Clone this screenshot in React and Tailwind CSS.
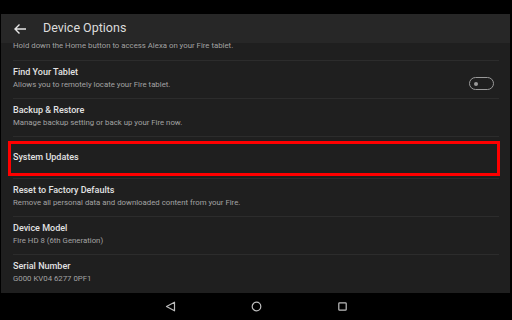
import React from "react";

const rows = [
  { title: "Find Your Tablet", sub: "Allows you to remotely locate your Fire tablet.", toggle: true },
  { title: "Backup & Restore", sub: "Manage backup setting or back up your Fire now." },
  { title: "System Updates", highlight: true },
  { title: "Reset to Factory Defaults", sub: "Remove all personal data and downloaded content from your Fire." },
  { title: "Device Model", sub: "Fire HD 8 (6th Generation)" },
  { title: "Serial Number", sub: "G000 KV04 6277 0PF1" },
];

function Toggle() {
  return (
    <div className="mt-[11px] mr-[5px] flex h-[13px] w-[25px] shrink-0 items-center rounded-full border-[1.5px] border-[#9a9a9a] pl-[4px]">
      <div className="h-[4px] w-[4px] rounded-full bg-[#9a9a9a]" />
    </div>
  );
}

function Row({ row, last }) {
  if (row.highlight) {
    return (
      <div className="relative flex h-[42px] items-center border-b border-[#2c2c2c] pb-[1px]">
        <div className="text-[9px] font-medium leading-[13px] text-[#e2e2e2]">{row.title}</div>
        <div className="absolute -left-[5px] -right-[1px] top-[4px] bottom-[2px] border-[3px] border-[#ff0000]" />
      </div>
    );
  }
  return (
    <div
      className={[
        "flex h-[38px] justify-between pt-[5px]",
        last ? "" : "border-b border-[#2c2c2c]",
      ].join(" ")}
    >
      <div>
        <div className="text-[9px] font-medium leading-[13px] text-[#e2e2e2]">{row.title}</div>
        <div className="text-[7.8px] leading-[11px] text-[#a3a3a3]">{row.sub}</div>
      </div>
      {row.toggle && <Toggle />}
    </div>
  );
}

export default function App() {
  return (
    <div
      className="flex h-[320px] w-[512px] flex-col bg-black"
      style={{ fontFamily: "Roboto, 'Liberation Sans', sans-serif" }}
    >
      <div className="h-[14px] shrink-0" />

      <div className="ml-[1px] mr-[2px] flex h-[279px] flex-col bg-[#1f1f1f]">
        <div className="z-10 flex h-[29px] shrink-0 items-center bg-[#272727] pl-[12px]">
          <svg width="14" height="12" viewBox="0 0 14 12" className="mr-[16px]">
            <path d="M13 6H2M6.5 1.5 2 6l4.5 4.5" fill="none" stroke="#e6e6e6" strokeWidth="1.4" />
          </svg>
          <div className="text-[12.5px] text-[#dcdcdc]">Device Options</div>
        </div>

        <div className="flex-1 overflow-hidden">
          <div className="ml-[12px] mr-[11px]">
            <div className="flex h-[18px] flex-col justify-end border-b border-[#2c2c2c] pb-[9px]">
              <div className="shrink-0 text-[7.8px] leading-[11px] text-[#a3a3a3]">
                Hold down the Home button to access Alexa on your Fire tablet.
              </div>
            </div>
            {rows.map((row, i) => (
              <Row key={row.title} row={row} last={i === rows.length - 1} />
            ))}
          </div>
        </div>
      </div>

      <div className="flex flex-1 items-center justify-center gap-[75px]">
        <svg width="11" height="11" viewBox="0 0 11 11">
          <path d="M9.5 1.2v8.6L1.5 5.5z" fill="none" stroke="#bdbdbd" strokeWidth="1.2" strokeLinejoin="round" />
        </svg>
        <svg width="11" height="11" viewBox="0 0 11 11">
          <circle cx="5.5" cy="5.5" r="4.3" fill="none" stroke="#bdbdbd" strokeWidth="1.2" />
        </svg>
        <svg width="11" height="11" viewBox="0 0 11 11">
          <rect x="1.8" y="1.8" width="7.4" height="7.4" rx="0.8" fill="none" stroke="#bdbdbd" strokeWidth="1.2" />
        </svg>
      </div>
    </div>
  );
}
